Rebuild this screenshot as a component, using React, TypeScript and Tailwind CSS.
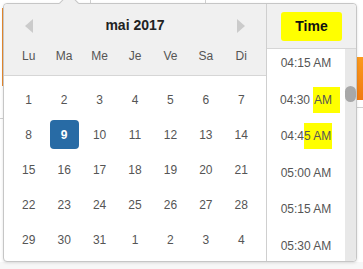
import React from 'react';

const weekDays = ['Lu', 'Ma', 'Me', 'Je', 'Ve', 'Sa', 'Di'];

const weeks = [
  [1, 2, 3, 4, 5, 6, 7],
  [8, 9, 10, 11, 12, 13, 14],
  [15, 16, 17, 18, 19, 20, 21],
  [22, 23, 24, 25, 26, 27, 28],
  [29, 30, 31, 1, 2, 3, 4],
];

function Calendar() {
  return (
    <div className="flex w-[263px] flex-col border-r border-[#cfcfcf]">
      <div className="h-[72px] border-b border-[#d6d6d6] bg-[#f0f0f0] px-[7px]">
        <div className="flex h-[43px] items-center">
          <div className="flex w-[36px] justify-center">
            <span className="h-0 w-0 border-y-[7px] border-r-[8px] border-y-transparent border-r-[#cbcbcb]" />
          </div>
          <div className="flex-1 text-center text-[14px] font-bold text-[#222]">mai 2017</div>
          <div className="flex w-[36px] justify-center">
            <span className="h-0 w-0 border-y-[7px] border-l-[8px] border-y-transparent border-l-[#cbcbcb]" />
          </div>
        </div>
        <div className="grid h-[16px] grid-cols-7 items-center text-center text-[12px] text-[#555]">
          {weekDays.map((d) => (
            <span key={d}>{d}</span>
          ))}
        </div>
      </div>
      <div className="px-[7px] pt-[6px]">
        {weeks.map((w, i) => (
          <div key={i} className="grid h-[35px] grid-cols-7 items-center text-[12px] text-[#555]">
            {w.map((d, j) => (
              <div key={j} className="flex justify-center">
                {i === 1 && d === 9 ? (
                  <span className="flex h-[29px] w-[29px] items-center justify-center rounded-[4px] bg-[#286ba5] font-bold text-white">
                    {d}
                  </span>
                ) : (
                  <span>{d}</span>
                )}
              </div>
            ))}
          </div>
        ))}
      </div>
    </div>
  );
}

function TimeList() {
  return (
    <div className="flex flex-1 flex-col">
      <div className="flex h-[45px] items-center justify-center border-b border-[#d6d6d6] bg-[#f0f0f0]">
        <span className="rounded-[3px] bg-[#ffff00] px-[14px] py-[4px] text-[14px] font-bold text-[#111]">Time</span>
      </div>
      <div className="flex flex-1 overflow-hidden">
        <div className="flex-1 overflow-hidden">
          <div className="-mt-[4px] text-[12px] text-[#555]">
            <div className="flex h-[36.5px] items-center justify-center">04:15 AM</div>
            <div className="flex h-[36.5px] items-center justify-center">
              04:30
              <span className="ml-[3px] -mr-[8px] bg-[#ffff00] py-[4px] pr-[8px] pl-[1px]">AM</span>
            </div>
            <div className="flex h-[36.5px] items-center justify-center">
              04:4
              <span className="bg-[#ffff00] py-[4px] -mr-[1px] pr-[1px]">5 AM</span>
            </div>
            <div className="flex h-[36.5px] items-center justify-center">05:00 AM</div>
            <div className="flex h-[36.5px] items-center justify-center">05:15 AM</div>
            <div className="flex h-[36.5px] items-center justify-center">05:30 AM</div>
          </div>
        </div>
        <div className="w-[11px] bg-[#e8e8e8] pt-[37px]">
          <div className="h-[16px] w-[11px] rounded-full bg-[#a8a8a8]" />
        </div>
      </div>
    </div>
  );
}

export default function App() {
  return (
    <div className="relative h-[269px] w-[363px] overflow-hidden bg-white font-['Liberation_Sans',Arial,sans-serif]">
      {/* page behind the popup */}
      <div className="absolute top-[262px] left-0 h-[7px] w-full bg-[#f7f7f7]" />
      <div className="absolute top-[8px] left-[2px] h-[78px] w-px bg-[#e88a2e]" />
      <div className="absolute top-[118px] left-0 h-px w-[4px] bg-[#d0d0d0]" />
      <div className="absolute top-0 left-[90px] h-[4px] w-px bg-[#d0d0d0]" />
      <div className="absolute top-0 left-[205px] h-[4px] w-px bg-[#d0d0d0]" />
      <div className="absolute top-[57px] left-[356px] h-[43px] w-[7px] bg-gradient-to-b from-[#fb9a1c] to-[#f07a10]" />
      <div className="absolute top-[107px] left-[356px] h-px w-[7px] bg-[#d0d0d0]" />

      <div className="absolute top-[3px] left-[3px] flex h-[259px] w-[354px] rounded-[4px] border border-[#c6c6c6] bg-white shadow-[0_1px_3px_rgba(0,0,0,0.12)]">
        <span className="absolute -top-[8px] left-[58px] h-[14px] w-[14px] rotate-45 border-t border-l border-[#c6c6c6] bg-[#f0f0f0]" />
        <div className="relative flex w-full overflow-hidden rounded-[4px]">
          <Calendar />
          <TimeList />
        </div>
      </div>
    </div>
  );
}
